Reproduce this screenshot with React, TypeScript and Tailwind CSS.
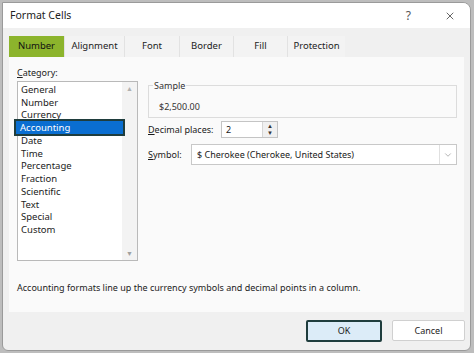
import { ChevronDown, X } from "lucide-react"

const categories = ["General", "Number", "Currency", "Accounting", "Date", "Time", "Percentage", "Fraction", "Scientific", "Text", "Special", "Custom"]
const tabs = ["Number", "Alignment", "Font", "Border", "Fill", "Protection"]

export default function App() {
    return (
        <div className="w-[474px] h-[353px] bg-[#bdbdbd] pt-[2px] pl-[2px] pr-[3px] pb-[2px] font-['Noto_Sans',sans-serif] text-[9px] text-[#1a1a1a] overflow-hidden">
            <div className="h-full flex flex-col bg-[#f0f0f0] border border-[#9a9a9a] rounded-tr-[8px] rounded-b-[6px] overflow-hidden">
                {/* title bar */}
                <div className="h-[25px] bg-white flex items-center pl-[7px] pr-[14px] shrink-0">
                    <span className="text-[10.5px] text-[#222]">Format Cells</span>
                    <span className="ml-auto mr-[33px] text-[12px] text-[#555]">?</span>
                    <X className="w-[12px] h-[12px] text-[#333]" strokeWidth={1.5} />
                </div>

                {/* tabs */}
                <div className="flex pl-[6px] pt-[8px] shrink-0 text-[9.5px]">
                    {tabs.map((t, i) => (
                        <div
                            key={t}
                            className={
                                i === 0
                                    ? "h-[21px] w-[55px] bg-[#8cb42c] flex items-center justify-center text-[#111]"
                                    : "h-[21px] bg-[#f3f3f3] border-l border-[#e2e2e2] flex items-center justify-center text-[#222] " +
                                      (t === "Alignment" ? "w-[60px]" : t === "Font" ? "w-[55px]" : t === "Border" ? "w-[54px]" : t === "Fill" ? "w-[54px]" : "w-[58px]")
                            }
                        >
                            {t}
                        </div>
                    ))}
                </div>

                {/* page */}
                <div className="mx-[6px] h-[255px] bg-[#fafafa] flex flex-col pl-[8px] pr-[7px] pt-[9px] shrink-0">
                    <div className="flex gap-[10px]">
                        <div className="flex flex-col w-[121px]">
                            <span className="leading-[13px] text-[#222]"><span className="underline">C</span>ategory:</span>
                            <div className="mt-[2px] h-[180px] bg-white border border-[#b9b9b9] flex">
                                <div className="flex-1 flex flex-col pt-[1px] text-[9.5px]">
                                    {categories.map((c) =>
                                        c === "Accounting" ? (
                                            <div key={c} className="h-[13px] -ml-[2px] bg-[#0a6ed1] outline outline-2 outline-[#1f3d3d] text-white pl-[4px] leading-[13px] mr-[-1px] relative z-10">
                                                {c}
                                            </div>
                                        ) : (
                                            <div key={c} className="h-[12.7px] pl-[3px] leading-[13px] text-[#222]">
                                                {c}
                                            </div>
                                        )
                                    )}
                                </div>
                                <div className="w-[15px] bg-[#f3f3f3] flex flex-col items-center justify-between py-[3px]">
                                    <span className="text-[7px] text-[#b0b0b0] leading-none">▲</span>
                                    <span className="text-[7px] text-[#a0a0a0] leading-none">▼</span>
                                </div>
                            </div>
                        </div>

                        <div className="flex-1 flex flex-col pt-[19px]">
                            <div className="relative h-[33px] border border-[#dcdcdc]">
                                <span className="absolute -top-[7px] left-[4px] bg-[#fafafa] px-[1px] leading-[13px] text-[#333]">Sample</span>
                                <div className="pt-[14px] pl-[10px] text-[#333] leading-[13px]">$2,500.00</div>
                            </div>
                            <div className="flex items-center mt-[3px] h-[17px]">
                                <span className="w-[73px] whitespace-nowrap"><span className="underline">D</span>ecimal places:</span>
                                <div className="w-[57px] h-[17px] bg-white border border-[#c4c4c4] flex">
                                    <span className="flex-1 pl-[4px] leading-[15px]">2</span>
                                    <div className="w-[15px] flex flex-col bg-[#f0f0f0] border-l border-[#d6d6d6]">
                                        <span className="h-[7px] text-[6px] leading-[8px] text-center text-[#333]">▲</span>
                                        <span className="h-[8px] text-[6px] leading-[8px] text-center text-[#333]">▼</span>
                                    </div>
                                </div>
                            </div>
                            <div className="flex items-center mt-[6px] h-[21px]">
                                <span className="w-[43px] whitespace-nowrap"><span className="underline">S</span>ymbol:</span>
                                <div className="flex-1 h-[21px] bg-white border border-[#c8c8c8] flex items-center pl-[5px]">
                                    <span className="flex-1">$ Cherokee (Cherokee, United States)</span>
                                    <div className="w-[17px] h-full border-l border-[#e0e0e0] flex items-center justify-center">
                                        <ChevronDown className="w-[10px] h-[10px] text-[#888]" strokeWidth={1.5} />
                                    </div>
                                </div>
                            </div>
                        </div>
                    </div>
                    <p className="mt-[20px] text-[#222]">Accounting formats line up the currency symbols and decimal points in a column.</p>
                </div>

                {/* buttons */}
                <div className="flex justify-end gap-[10px] pr-[5px] pt-[8px]">
                    <button className="w-[76px] h-[22px] bg-[#dcecf8] border-2 border-[#1f3d3d] rounded-[2px] text-[#222]">OK</button>
                    <button className="w-[73px] h-[21px] bg-white border border-[#d0d0d0] rounded-[2px] text-[#222]">Cancel</button>
                </div>
            </div>
        </div>
    )
}
